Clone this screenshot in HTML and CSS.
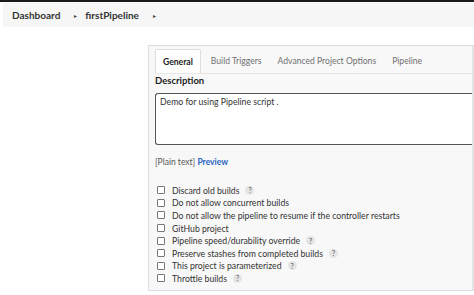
FILE: index.html
```html
<!DOCTYPE html>
<html lang="en">
<head>
  <meta charset="UTF-8" />
  <title>firstPipeline Config</title>
  <link rel="stylesheet" href="styles.css">
</head>
<body>

  <!-- BARRA SUPERIOR -->
  <div class="topo"></div>
  <div class="breadcrumb">
    <span class="crumb">Dashboard</span>
    <span class="seta">&#9656;</span>
    <span class="crumb">firstPipeline</span>
    <span class="seta">&#9656;</span>
  </div>

  <!-- PAINEL DE CONFIG -->
  <div class="painel">
    <div class="abas">
      <div class="aba ativa">General</div>
      <div class="aba">Build Triggers</div>
      <div class="aba">Advanced Project Options</div>
      <div class="aba">Pipeline</div>
    </div>

    <div class="rotulo">Description</div>
    <div class="descricao">Demo for using Pipeline script .</div>
    <div class="formato">[Plain text] <a href="#">Preview</a></div>

    <ul class="opcoes">
      <li><span class="caixa"></span>Discard old builds <span class="ajuda">?</span></li>
      <li><span class="caixa"></span>Do not allow concurrent builds</li>
      <li><span class="caixa"></span>Do not allow the pipeline to resume if the controller restarts</li>
      <li><span class="caixa"></span>GitHub project</li>
      <li><span class="caixa"></span>Pipeline speed/durability override <span class="ajuda">?</span></li>
      <li><span class="caixa"></span>Preserve stashes from completed builds <span class="ajuda">?</span></li>
      <li><span class="caixa"></span>This project is parameterized <span class="ajuda">?</span></li>
      <li><span class="caixa"></span>Throttle builds <span class="ajuda">?</span></li>
    </ul>
  </div>

</body>
</html>
```

FILE: styles.css
```css
body {
  margin: 0;
  padding: 0;
  font-family: Lato, 'Open Sans', sans-serif;
  background: #fff;
  color: #333;
  width: 474px;
  height: 295px;
  overflow: hidden;
}

.topo {
  height: 2px;
  background: #1a1a1a;
}

.breadcrumb {
  margin: 1px 0 0 3px;
  height: 24px;
  background: #f6f6f6;
  display: flex;
  align-items: center;
  padding-left: 9px;
  font-size: 10px;
}

.crumb {
  font-weight: bold;
  color: #333;
}

.seta {
  font-size: 6px;
  color: #444;
  margin: 0 8px 0 14px;
}

/* PAINEL */
.painel {
  margin: 18px 0 0 148px;
  height: 246px;
  background: #f8f8f8;
  border: 1px solid #ddd;
  border-right: 2px solid #e4e4e4;
  padding: 3px 0 0 6px;
  box-sizing: border-box;
}

.abas {
  display: flex;
  height: 24px;
  border-bottom: 1px solid #e6e6e6;
  font-size: 8.6px;
  color: #707070;
}

.aba {
  padding: 0 6px;
  margin-right: 4px;
  display: flex;
  align-items: center;
}

.aba.ativa {
  background: #fff;
  border: 1px solid #ddd;
  border-bottom: none;
  border-radius: 2px 2px 0 0;
  color: #222;
  font-weight: bold;
  padding: 0 7px;
  margin-right: 4px;
}

.rotulo {
  font-size: 9.5px;
  font-weight: bold;
  color: #222;
  line-height: 14px;
}

.descricao {
  margin-top: 5px;
  height: 52px;
  box-sizing: border-box;
  background: #fff;
  border: 1.5px solid #555;
  border-right: none;
  border-radius: 3px 0 0 3px;
  padding: 2px 4px;
  font-size: 8.7px;
  line-height: 12px;
  color: #333;
}

.formato {
  font-size: 8.5px;
  line-height: 12px;
  color: #555;
  margin-top: 11px;
}

.formato a {
  color: #2964c0;
  font-weight: bold;
  text-decoration: none;
}

.opcoes {
  list-style: none;
  margin: 16px 0 0 0;
  padding: 0 0 0 2px;
  font-size: 8.7px;
  color: #333;
}

.opcoes li {
  display: flex;
  align-items: center;
  height: 12.6px;
}

.caixa {
  width: 6px;
  height: 6px;
  border: 1px solid #777;
  border-radius: 1px;
  background: #fff;
  margin-right: 7px;
}

.ajuda {
  display: inline-flex;
  align-items: center;
  justify-content: center;
  width: 9px;
  height: 9px;
  border-radius: 50%;
  background: #e4e4e4;
  color: #555;
  font-size: 7px;
  margin-left: 6px;
}
```
